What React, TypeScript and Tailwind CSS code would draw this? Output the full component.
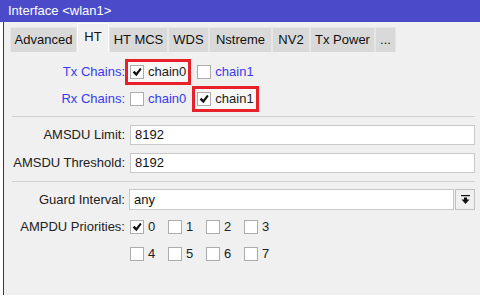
import type { ReactNode } from "react";

const tabs = [
  { name: "Advanced", w: "w-[67px]" },
  { name: "HT", w: "w-[32px]", active: true },
  { name: "HT MCS", w: "w-[59px]" },
  { name: "WDS", w: "w-[41px]" },
  { name: "Nstreme", w: "w-[63px]" },
  { name: "NV2", w: "w-[38px]" },
  { name: "Tx Power", w: "w-[65px]" },
  { name: "...", w: "w-[21px]" },
];

function Box({ checked }: { checked?: boolean }) {
  return (
    <span className="w-[14px] h-[14px] bg-white border border-[#adadad] flex items-center justify-center shrink-0">
      {checked && (
        <svg width="10" height="10" viewBox="0 0 10 10">
          <path d="M0.6 5.4 L2.6 3.8 L4.2 5.8 L8.2 0.8 L9.6 2.2 L4.4 9.2 Z" fill="#111" />
        </svg>
      )}
    </span>
  );
}

function Check({
  label,
  checked,
  marked,
  blue,
}: {
  label: string;
  checked?: boolean;
  marked?: boolean;
  blue?: boolean;
}) {
  return (
    <span className="relative flex items-center gap-[4px]">
      {marked && (
        <span className="absolute -left-[5px] -right-[5px] -top-[3px] -bottom-[3px] border-[3px] border-[#e8202a] bg-[#f7f7f7]" />
      )}
      <span className="relative flex items-center gap-[4px]">
        <Box checked={checked} />
        <span className={marked || !blue ? "text-[#222]" : "text-[#3a3aee]"}>{label}</span>
      </span>
    </span>
  );
}

function Row({ label, blue, children }: { label: string; blue?: boolean; children: ReactNode }) {
  return (
    <div className="flex items-center h-[20px]">
      <div className={`w-[122px] text-right pr-[1px] shrink-0 ${blue ? "text-[#3a3aee]" : "text-[#222]"}`}>
        {label}
      </div>
      <div className="flex-1 flex items-center pl-[4px]">{children}</div>
    </div>
  );
}

function Field({ value }: { value: string }) {
  return (
    <div className="flex-1 h-[20px] bg-white border border-[#c8c8c8] pl-[4px] flex items-center text-[#111]">
      {value}
    </div>
  );
}

export default function App() {
  return (
    <div className="w-[480px] h-[301px] bg-white overflow-hidden text-[13px] font-['Liberation_Sans',Arial,sans-serif]">
      <div className="h-[22px] bg-[#4b4bc9] text-white pl-[8px] flex items-center">Interface &lt;wlan1&gt;</div>
      <div className="flex h-[273px]">
        <div className="w-[3px] bg-white" />
        <div className="w-px bg-[#3a3a3a]" />
        <div className="flex-1 bg-[#f0f0f0] pr-[5px]">
          <div className="h-[30px] flex items-end pl-[6px]">
            {tabs.map((t) =>
              t.active ? (
                <div
                  key={t.name}
                  className={`${t.w} h-[29px] bg-[#f0f0f0] border-t border-x border-[#fafafa] flex items-center justify-center pb-[3px] text-[#111]`}
                >
                  {t.name}
                </div>
              ) : (
                <div
                  key={t.name}
                  className={`${t.w} h-[25px] bg-[#d9d9d9] border-x border-t border-[#e6e6e6] flex items-center justify-center text-[#111]`}
                >
                  {t.name}
                </div>
              )
            )}
          </div>

          <div className="pt-[10px] flex flex-col">
            <Row label="Tx Chains:" blue>
              <div className="flex items-center gap-[11px]">
                <Check label="chain0" checked marked />
                <Check label="chain1" blue />
              </div>
            </Row>
            <div className="mt-[7px]">
              <Row label="Rx Chains:" blue>
                <div className="flex items-center gap-[11px]">
                  <Check label="chain0" blue />
                  <Check label="chain1" checked marked />
                </div>
              </Row>
            </div>

            <div className="ml-[8px] mt-[7px] h-px bg-[#d2d2d2]" />

            <div className="mt-[8px]">
              <Row label="AMSDU Limit:">
                <Field value="8192" />
              </Row>
            </div>
            <div className="mt-[8px]">
              <Row label="AMSDU Threshold:">
                <Field value="8192" />
              </Row>
            </div>

            <div className="ml-[8px] mt-[8px] h-px bg-[#d2d2d2]" />

            <div className="mt-[7px]">
              <div className="flex items-center h-[21px]">
                <div className="w-[122px] text-right pr-[1px] shrink-0 text-[#222]">Guard Interval:</div>
                <div className="flex-1 flex items-center pl-[3px] gap-[1px] h-[21px]">
                  <div className="flex-1 h-[21px] bg-white border border-[#c8c8c8] pl-[4px] flex items-center text-[#111]">
                    any
                  </div>
                  <div className="w-[20px] h-[21px] border border-[#c0c0c0] bg-[#f0f0f0] flex items-center justify-center">
                    <svg width="9" height="10" viewBox="0 0 9 10">
                      <rect x="0" y="0" width="9" height="1.2" fill="#111" />
                      <rect x="3" y="2.5" width="3" height="2.5" fill="#111" />
                      <path d="M0.5 4.5 H8.5 L4.5 9 Z" fill="#111" />
                    </svg>
                  </div>
                </div>
              </div>
            </div>

            <div className="mt-[7px]">
              <Row label="AMPDU Priorities:">
                {["0", "1", "2", "3"].map((n) => (
                  <span key={n} className="w-[38px] flex">
                    <Check label={n} checked={n === "0"} />
                  </span>
                ))}
              </Row>
            </div>
            <div className="mt-[7px]">
              <Row label="">
                {["4", "5", "6", "7"].map((n) => (
                  <span key={n} className="w-[38px] flex">
                    <Check label={n} />
                  </span>
                ))}
              </Row>
            </div>
          </div>
        </div>
      </div>
    </div>
  );
}
